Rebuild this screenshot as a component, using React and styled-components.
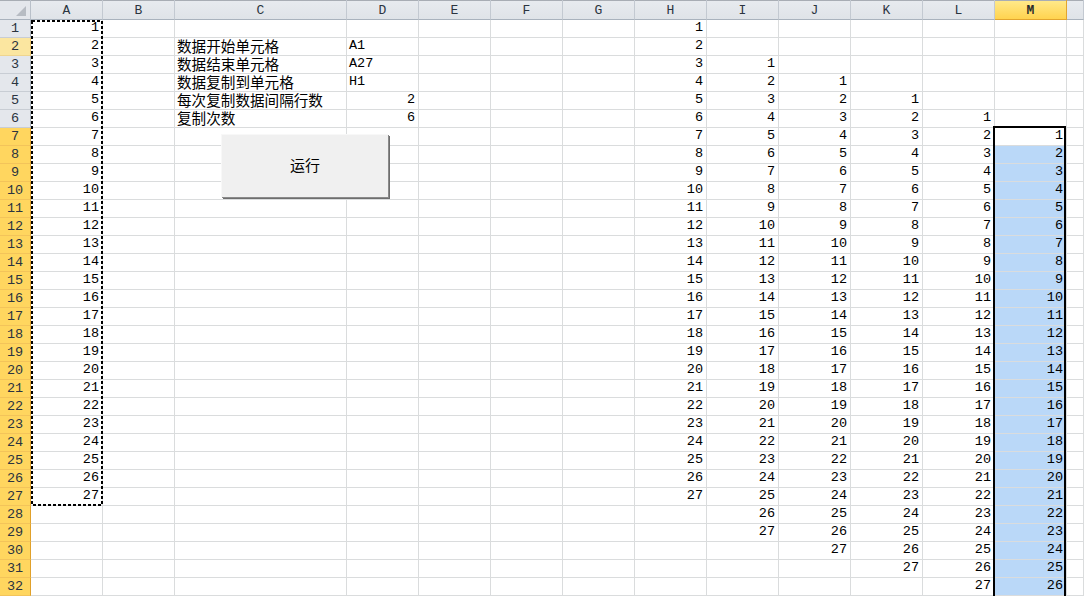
import React from "react";
import styled, { createGlobalStyle, css } from "styled-components";

const GlobalStyle = createGlobalStyle`
  html, body { margin: 0; padding: 0; background: #ffffff; overflow: hidden; }
  * { box-sizing: border-box; }
`;

const COLS = ["A", "B", "C", "D", "E", "F", "G", "H", "I", "J", "K", "L", "M", "N"];
const ROWS = 32;
const GRID = "#DADCDD";

const Sheet = styled.div`
  position: relative;
  display: grid;
  grid-template-columns: 31px 72px 72px 172px repeat(10, 72px) 1fr;
  grid-template-rows: 20px repeat(${ROWS}, 18px);
  width: 1084px;
  height: 596px;
  overflow: hidden;
  font-family: "Liberation Mono", "Noto Sans CJK SC", monospace;
  color: #000;
`;

const Corner = styled.div`
  position: relative;
  background: #e4e7ec;
  border-right: 1px solid #b9c0c9;
  border-bottom: 1px solid #a9b2bd;
  box-shadow: inset 0 1px 0 #a8adb4;
  &::after {
    content: "";
    position: absolute;
    right: 4px;
    bottom: 3px;
    width: 0;
    height: 0;
    border-left: 10px solid transparent;
    border-bottom: 10px solid #b7bcc3;
  }
`;

const ColHeader = styled.div`
  display: flex;
  align-items: center;
  justify-content: center;
  font-size: 13px;
  color: #2b3440;
  padding-top: 2px;
  background: linear-gradient(#e8ebef, #dfe3e8);
  border-right: 1px solid #c3c9d1;
  border-bottom: 1px solid #a9b2bd;
  box-shadow: inset 0 1px 0 #a8adb4;
  ${(p) =>
    p.$selected &&
    css`
      background: linear-gradient(#ffea8c, #ffd34f);
      border-right-color: #e2a52e;
      border-bottom-color: #e2a52e;
      color: #2a2a2a;
      font-weight: bold;
    `}
`;

const RowHeader = styled.div`
  display: flex;
  align-items: flex-end;
  justify-content: center;
  font-size: 13.5px;
  line-height: 17px;
  color: #2b3440;
  background: #e4e7ec;
  border-right: 1px solid #a9b2bd;
  border-bottom: 1px solid #c8cdd4;
  ${(p) =>
    p.$state === "light" &&
    css`
      background: #fbe6a0;
      border-right-color: #e9c26a;
      border-bottom-color: #efd58f;
    `}
  ${(p) =>
    p.$state === "selected" &&
    css`
      background: #ffd65f;
      border-right-color: #e0a02a;
      border-bottom-color: #f3c45a;
    `}
`;

const Cell = styled.div`
  display: flex;
  align-items: flex-end;
  justify-content: ${(p) => (p.$align === "right" ? "flex-end" : "flex-start")};
  padding: 0 3px 1px 2px;
  white-space: nowrap;
  background: ${(p) => (p.$selected ? "#bad8f8" : "#ffffff")};
  border-right: 1px solid ${GRID};
  border-bottom: 1px solid ${GRID};
`;

const Value = styled.span`
  display: inline-block;
  height: 16px;
  line-height: 16px;
  overflow: visible;
  font-size: ${(p) => (p.$cjk ? "14.6px" : "13.5px")};
  font-family: ${(p) =>
    p.$cjk ? `"Noto Sans CJK SC", sans-serif` : `"Liberation Mono", "Noto Sans CJK SC", monospace`};
`;

const MarchingAnts = styled.svg`
  position: absolute;
  left: 30px;
  top: 19px;
  pointer-events: none;
`;

const SelectionBox = styled.div`
  position: absolute;
  left: 993px;
  top: 126px;
  width: 73px;
  height: 480px;
  border: 2px solid #000;
  pointer-events: none;
`;

const RunButton = styled.button`
  position: absolute;
  left: 221px;
  top: 134px;
  width: 167px;
  height: 63px;
  background: #f0f0f0;
  border: none;
  border-top: 1px solid #f8f8f8;
  border-left: 1px solid #f8f8f8;
  box-shadow: 1px 1px 0 #8a8a8a, 2px 2px 0 #6e6e6e;
  font-family: "Noto Sans CJK SC", sans-serif;
  font-size: 15px;
  color: #000;
  padding: 0 0 4px 0;
  cursor: default;
`;

const labels = {
  2: "数据开始单元格",
  3: "数据结束单元格",
  4: "数据复制到单元格",
  5: "每次复制数据间隔行数",
  6: "复制次数",
};

function getCell(col, row) {
  if (col === "A" && row <= 27) return { text: String(row), align: "right" };
  if (col === "C" && labels[row]) return { text: labels[row], align: "left", cjk: true };
  if (col === "D") {
    if (row === 2) return { text: "A1", align: "left" };
    if (row === 3) return { text: "A27", align: "left" };
    if (row === 4) return { text: "H1", align: "left" };
    if (row === 5) return { text: "2", align: "right" };
    if (row === 6) return { text: "6", align: "right" };
  }
  const starts = { H: 1, I: 3, J: 4, K: 5, L: 6, M: 7 };
  if (starts[col] !== undefined) {
    const v = row - starts[col] + 1;
    if (v >= 1 && v <= 27) return { text: String(v), align: "right" };
  }
  return null;
}

export default function App() {
  const cells = [];
  cells.push(<Corner key="corner" />);
  COLS.forEach((c) =>
    cells.push(
      <ColHeader key={"h" + c} $selected={c === "M"}>
        {c === "N" ? "" : c}
      </ColHeader>
    )
  );
  for (let r = 1; r <= ROWS; r++) {
    const state = r >= 7 ? "selected" : r === 2 ? "light" : "none";
    cells.push(
      <RowHeader key={"r" + r} $state={state}>
        {r}
      </RowHeader>
    );
    COLS.forEach((c) => {
      const d = getCell(c, r);
      cells.push(
        <Cell key={c + r} $align={d ? d.align : "left"} $selected={c === "M" && r >= 8}>
          {d ? <Value $cjk={d.cjk}>{d.text}</Value> : null}
        </Cell>
      );
    });
  }

  return (
    <>
      <GlobalStyle />
      <Sheet>
        {cells}
        <MarchingAnts width="74" height="488" viewBox="0 0 74 488">
          <rect
            x="2"
            y="2"
            width="70"
            height="484"
            fill="none"
            stroke="#000"
            strokeWidth="2"
            strokeDasharray="3 2"
          />
        </MarchingAnts>
        <SelectionBox />
        <RunButton>运行</RunButton>
      </Sheet>
    </>
  );
}
